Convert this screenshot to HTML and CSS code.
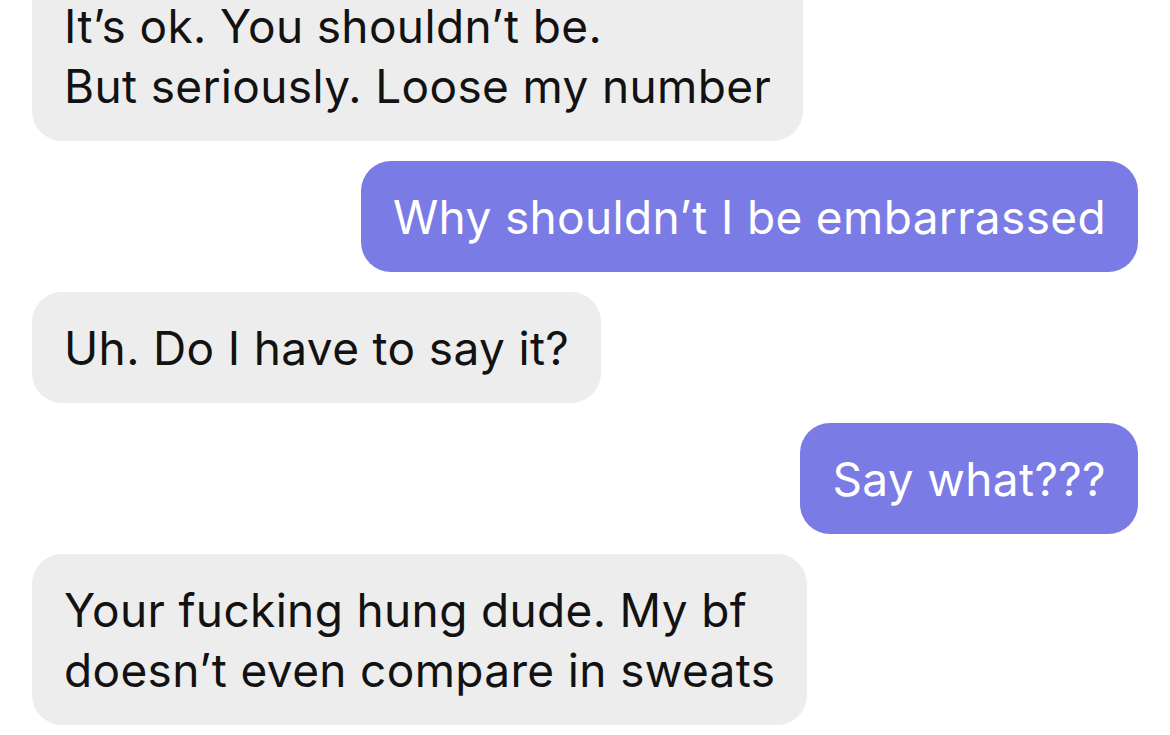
FILE: index.html
```html
<!DOCTYPE html>
<html lang="en">
<head>
  <meta charset="UTF-8">
  <meta name="viewport" content="width=device-width, initial-scale=1.0">
  <title>Messages</title>
  <link rel="stylesheet" href="styles.css">
</head>
<body>
  <div class="thread">
    <div class="msg in">It’s ok. You shouldn’t be.<br>But seriously. Loose my number</div>
    <div class="msg out">Why shouldn’t I be embarrassed</div>
    <div class="msg in">Uh. Do I have to say it?</div>
    <div class="msg out">Say what???</div>
    <div class="msg in">Your fucking hung dude. My bf<br>doesn’t even compare in sweats</div>
  </div>
</body>
</html>
```

FILE: styles.css
```css
body {
  margin: 0;
  background: #fff;
  font-family: Inter, "Noto Sans", sans-serif;
  overflow: hidden;
}
.thread {
  display: flex;
  flex-direction: column;
  gap: 20px;
  margin-top: -30px;
  padding: 0 32px;
}
.msg {
  font-size: 46px;
  line-height: 60px;
  letter-spacing: 0.35px;
  padding: 26px 32px 25px;
  border-radius: 30px;
  white-space: nowrap;
}
.in {
  align-self: flex-start;
  background: #ededed;
  color: #121212;
}
.out {
  align-self: flex-end;
  background: #7b7be6;
  color: #fff;
}
```
